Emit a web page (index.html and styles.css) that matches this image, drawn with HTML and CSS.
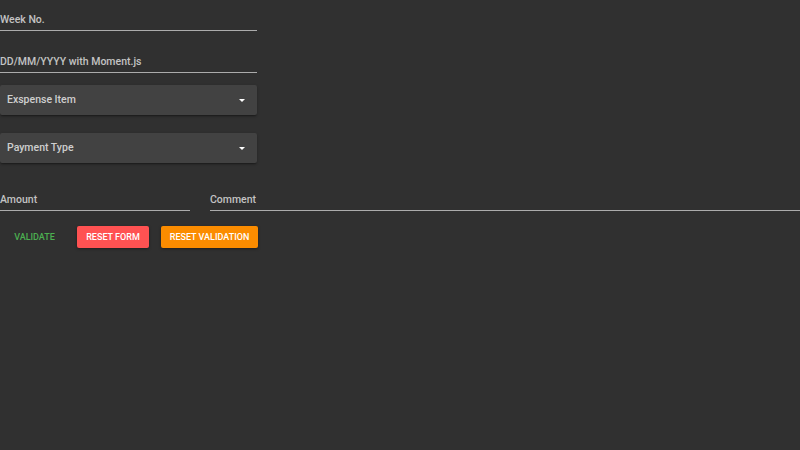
FILE: index.html
```html
<!DOCTYPE html>
<html>
<head>
<meta charset="utf-8">
<link rel="stylesheet" href="styles.css">
</head>
<body>
<div class="page">
  <div class="col">
    <div class="field f1"><span class="label">Week No.</span></div>
    <div class="field f2"><span class="label">DD/MM/YYYY with Moment.js</span></div>
    <div class="select s1"><span class="label">Exspense Item</span><span class="arrow"></span></div>
    <div class="select s2"><span class="label">Payment Type</span><span class="arrow"></span></div>
  </div>
  <div class="row">
    <div class="field amount"><span class="label">Amount</span></div>
    <div class="field comment"><span class="label">Comment</span></div>
  </div>
  <div class="buttons">
    <button class="btn flat">VALIDATE</button>
    <button class="btn red">RESET FORM</button>
    <button class="btn orange">RESET VALIDATION</button>
  </div>
</div>
</body>
</html>
```

FILE: styles.css
```css
html, body {
  margin: 0;
  padding: 0;
  background: #303030;
  height: 100%;
}
body {
  font-family: Roboto, "Liberation Sans", sans-serif;
  color: rgba(255,255,255,0.7);
}
.page {
  width: 800px;
}
.col {
  width: 257px;
  display: flex;
  flex-direction: column;
}
.field {
  border-bottom: 1px solid rgba(255,255,255,0.6);
  display: flex;
  align-items: flex-end;
  height: 20px;
  padding-bottom: 3px;
  box-sizing: border-box;
}
.label {
  font-size: 10.5px;
  font-weight: 500;
  line-height: 14px;
  white-space: nowrap;
  color: rgba(255,255,255,0.72);
}
.f1 { margin-top: 11px; }
.f2 { margin-top: 22px; }
.select {
  margin-top: 12px;
  height: 30px;
  background: #424242;
  box-shadow: 0 2px 2px -1px rgba(0,0,0,0.35), 0 1px 3px rgba(0,0,0,0.2);
  display: flex;
  align-items: center;
  padding: 0 12px 0 7px;
  justify-content: space-between;
  border-radius: 2px;
}
.select .label {
  color: rgba(255,255,255,0.75);
}
.s2 { margin-top: 18px; }
.arrow {
  width: 0;
  height: 0;
  border-left: 3.5px solid transparent;
  border-right: 3.5px solid transparent;
  border-top: 3.5px solid #fff;
}
.row {
  display: flex;
  margin-top: 28px;
}
.amount { width: 190px; }
.comment { margin-left: 20px; flex: 1; }
.buttons {
  display: flex;
  margin-top: 15px;
  align-items: center;
}
.btn {
  font-family: Roboto, "Liberation Sans", sans-serif;
  font-size: 9px;
  font-weight: 500;
  height: 22px;
  border: none;
  border-radius: 2px;
  padding: 0;
  color: #fff;
  background: transparent;
  white-space: nowrap;
  text-align: center;
  cursor: pointer;
}
.flat {
  color: #4caf50;
  margin-left: 5px;
  width: 59px;
}
.red {
  background: #ff5252;
  margin-left: 13px;
  width: 72px;
  box-shadow: 0 1px 3px rgba(0,0,0,0.4);
}
.orange {
  background: #fb8c00;
  margin-left: 12px;
  width: 97px;
  box-shadow: 0 1px 3px rgba(0,0,0,0.4);
}
```
